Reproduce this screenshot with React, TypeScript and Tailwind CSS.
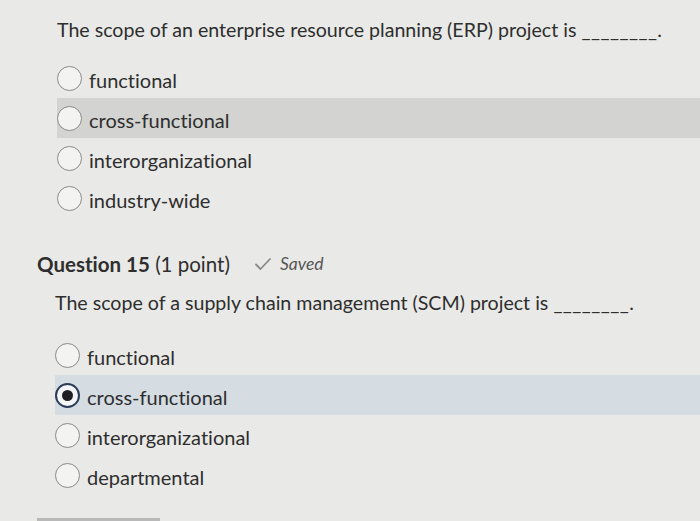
import React from 'react'

interface Question {
  text: string
  options: string[]
  selected: number
  highlight: 'gray' | 'blue'
}

const q1: Question = {
  text: 'The scope of an enterprise resource planning (ERP) project is',
  options: ['functional', 'cross-functional', 'interorganizational', 'industry-wide'],
  selected: -1,
  highlight: 'gray',
}

const q2: Question = {
  text: 'The scope of a supply chain management (SCM) project is',
  options: ['functional', 'cross-functional', 'interorganizational', 'departmental'],
  selected: 1,
  highlight: 'blue',
}

function Radio({ checked }: { checked: boolean }) {
  if (checked) {
    return (
      <span className="flex h-[25px] w-[25px] shrink-0 items-center justify-center rounded-full border-2 border-[#2c3b5a] bg-[#f4f5f6]">
        <span className="h-[11px] w-[11px] rounded-full bg-[#1f1f22]" />
      </span>
    )
  }
  return (
    <span className="h-[25px] w-[25px] shrink-0 rounded-full border-[1.5px] border-[#898989] bg-[#f3f3f2]" />
  )
}

function Options({ q }: { q: Question }) {
  return (
    <div className="flex flex-col">
      {q.options.map((opt, i) => {
        const hl = i === 1
        const bg = hl ? (q.highlight === 'gray' ? 'bg-[#d3d3d1]' : 'bg-[#d5dce2]') : ''
        return (
          <div key={opt} className={`flex h-[40px] items-center gap-[7px] ${bg}`}>
            <Radio checked={i === q.selected} />
            <span className="pt-[3px] text-[20px] text-[#2e2e2e]">{opt}</span>
          </div>
        )
      })}
    </div>
  )
}

export default function App() {
  return (
    <div
      className="flex h-[521px] w-[700px] flex-col overflow-hidden bg-[#e9e9e7] text-[#2e2e2e]"
      style={{ fontFamily: 'Lato, "Open Sans", sans-serif', fontVariantLigatures: 'none', fontFeatureSettings: '"liga" 0' }}
    >
      {/* Question 14 */}
      <div className="pl-[57px] pt-[16px]">
        <p className="text-[19.6px] leading-[28px]">
          {q1.text} <span className="tracking-[0.5px]">________.</span>
        </p>
        <div className="mt-[14px]">
          <Options q={q1} />
        </div>
      </div>

      {/* Question 15 */}
      <div className="mt-[32px] flex items-center pl-[37px]">
        <h3 className="text-[20.5px] leading-[28px]">
          <span className="font-bold">Question 15</span> (1 point)
        </h3>
        <svg className="ml-[24px] h-[14px] w-[18px]" viewBox="0 0 18 14" fill="none">
          <path d="M2 7.5 L6.5 12 L16 2" stroke="#8a8a8a" strokeWidth="1.8" strokeLinecap="round" strokeLinejoin="round" />
        </svg>
        <span className="ml-[8px] text-[17.5px] italic text-[#555]">Saved</span>
      </div>

      <div className="pl-[55px] pt-[11px]">
        <p className="text-[19.6px] leading-[28px]">
          {q2.text} <span className="tracking-[0.5px]">________.</span>
        </p>
        <div className="mt-[18px]">
          <Options q={q2} />
        </div>
      </div>

      <div className="mt-auto ml-[37px] h-[3px] w-[123px] bg-[#b9b9b9]" />
    </div>
  )
}
